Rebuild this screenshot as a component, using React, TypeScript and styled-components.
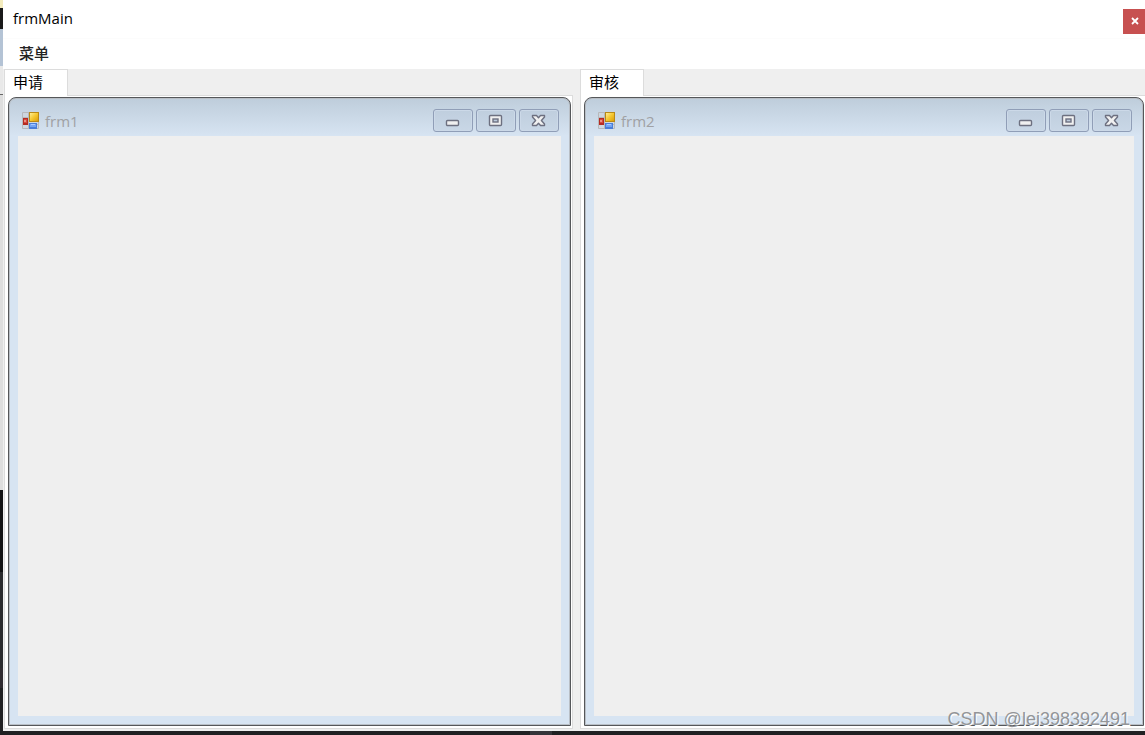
import React from "react";
import styled, { createGlobalStyle } from "styled-components";

const GlobalStyle = createGlobalStyle`
  * { box-sizing: border-box; }
  body {
    margin: 0;
    font-family: "Open Sans", "Noto Sans CJK SC", sans-serif;
    font-size: 15px;
    color: #000;
  }
  button { font: inherit; color: inherit; padding: 0; margin: 0; border: 0; background: none; }
`;

const Desktop = styled.div`
  position: relative;
  display: grid;
  grid-template-columns: 3px minmax(0, 1fr);
  grid-template-rows: minmax(0, 1fr) 4px;
  height: 100vh;
  overflow: hidden;
  background: #202022;
`;

const Behind = styled.div`
  background: linear-gradient(
    #f3ebbd 8px, #19191a 8px 29px, #b4c3d5 29px 66px, #e9e9e9 66px 94px,
    #666 94px 95px, #dedede 95px 490px, #121213 490px 572px, #2b2b2e 572px 668px,
    #302b30 668px 688px, #202022 688px
  );
`;

const Taskbar = styled.div`
  grid-column: 1 / -1;
  background: linear-gradient(90deg, #202022 530px, #353439 530px 552px, #202022 552px);
`;

const MainWindow = styled.div`
  display: flex;
  flex-direction: column;
  min-width: 0;
  background: #efefef;
`;

const TitleBar = styled.header`
  display: flex;
  justify-content: space-between;
  align-items: flex-start;
  height: 38px;
  padding: 9px 0 4px 10px;
  background: #fff;
`;

const Title = styled.span`
  line-height: 18px;
`;

const MainClose = styled.button`
  display: grid;
  place-items: center;
  width: 22px;
  height: 25px;
  padding: 0 0 2px 2px;
  background: #c75050;
`;

const MenuBar = styled.nav`
  height: 31px;
  padding: 0 10px;
  border-top: 1px solid #fcfcfc;
  background: #fff;
`;

const MenuItem = styled.button`
  padding: 4px 6px;
  line-height: 20px;
  font-weight: 500;
  color: #222;
`;

const Panes = styled.main`
  display: grid;
  grid-template-columns: 569fr 565fr;
  gap: 7px;
  flex: 1;
  min-height: 0;
  padding: 0 0 2px 1px;
`;

const Pane = styled.section`
  display: flex;
  flex-direction: column;
  min-width: 0;
`;

const Tab = styled.button`
  z-index: 1;
  align-self: flex-start;
  width: 64px;
  height: 27px;
  margin-bottom: -1px;
  padding: 0 0 3px 8px;
  border: 1px solid #dcdcdc;
  border-bottom: 0;
  line-height: 22px;
  text-align: left;
  background: #fff;
`;

const TabPage = styled.div<{ $clipped: boolean }>`
  display: flex;
  flex: 1;
  min-height: 0;
  padding: 1px 1px 2px 3px;
  border: 1px solid #dcdcdc;
  border-right-width: ${(p) => (p.$clipped ? 0 : 1)}px;
  background: #fff;
`;

const ChildWindow = styled.div`
  display: flex;
  flex-direction: column;
  flex: 1;
  min-width: 0;
  padding: 0 9px 9px 9px;
  border: 1px solid #55575a;
  border-radius: 8px 8px 0 0;
  box-shadow: inset 0 0 0 1px #b9bfc6;
  background: linear-gradient(#becddb, #d7e4f2 38px);
`;

const Caption = styled.div`
  display: flex;
  align-items: flex-start;
  height: 38px;
  padding: 11px 2px 0 4px;
`;

const CaptionText = styled.span`
  flex: 1;
  margin-left: 5px;
  line-height: 24px;
  color: #a0a1a4;
`;

const Controls = styled.div`
  display: flex;
  gap: 3px;
`;

const ControlButton = styled.button`
  display: grid;
  place-items: center;
  width: 40px;
  height: 23px;
  border: 1px solid #909eb7;
  border-radius: 3px;
  box-shadow: inset 0 0 0 1px #ccd9e8;
  background: linear-gradient(#bfcede, #c9d7e6);
`;

const Client = styled.div`
  flex: 1;
  background: #efefef;
`;

const Watermark = styled.span`
  position: absolute;
  right: 15px;
  bottom: 6px;
  font: 18px/20px "Liberation Sans", sans-serif;
  color: #939598;
  text-shadow: 1px 1px 0 #fff;
`;

const IconBox = styled.span`
  display: flex;
  padding-top: 3px;
`;

const FormIcon = () => (
  <svg width="18" height="18" viewBox="0 0 18 18" aria-hidden="true">
    <defs>
      <linearGradient id="gold" x2="1" y2="1">
        <stop stopColor="#fff2a0" />
        <stop offset=".5" stopColor="#f5c730" />
        <stop offset="1" stopColor="#d89a08" />
      </linearGradient>
    </defs>
    <path d="M.5 .5h16v16H.5zM6.5 .5v16M.5 5.5h6M.5 12.5h16" fill="#d0d5da" fillOpacity=".6" stroke="#b7b8bb" />
    <rect x="7.5" y=".5" width="9" height="9" fill="url(#gold)" stroke="#b98916" />
    <rect x="1" y="6" width="5" height="7" fill="#b52c22" />
    <path d="M2 7h3v4H2z" fill="#d8493c" />
    <path d="M2 8h2v2H2z" fill="#eb9083" />
    <rect x="7" y="11" width="8" height="6" fill="#4a7ed8" />
    <path d="M8 12h6v3H8z" fill="#73a4f5" />
    <path d="M9 12h4v1H9z" fill="#a9c9ff" />
  </svg>
);

const Glyph = ({ kind }: { kind: string }) => (
  <svg width="16" height="14" viewBox="0 0 16 14" aria-hidden="true">
    <g fill="#f0f0f0" stroke="#6d7080" strokeWidth="1.4">
      {kind === "Minimize" && <rect x="1.5" y="6.5" width="12" height="5" rx="1" />}
      {kind === "Maximize" && (
        <>
          <rect x="1.5" y="1.5" width="12" height="10" rx="1" />
          <rect x="5" y="5" width="5" height="3" fill="#bccbdc" />
        </>
      )}
      {kind === "Close" && (
        <path
          d="M1.5 1.5h4L7.5 3.7 9.5 1.5h4V3L10.4 6.5 13.5 10v1.5h-4L7.5 9.3 5.5 11.5h-4V10L4.6 6.5 1.5 3z"
          strokeLinejoin="round"
        />
      )}
    </g>
  </svg>
);

const forms = [
  { tab: "申请", title: "frm1" },
  { tab: "审核", title: "frm2" },
];

export default function App() {
  return (
    <>
      <GlobalStyle />
      <Desktop>
        <Behind />
        <MainWindow>
          <TitleBar>
            <Title>frmMain</Title>
            <MainClose aria-label="Close frmMain">
              <svg width="8" height="8" viewBox="0 0 8 8" aria-hidden="true">
                <path d="M1 1l6 6M7 1L1 7" stroke="#fff" strokeWidth="1.8" />
              </svg>
            </MainClose>
          </TitleBar>
          <MenuBar>
            <MenuItem>菜单</MenuItem>
          </MenuBar>
          <Panes>
            {forms.map((form, i) => (
              <Pane key={form.title}>
                <Tab>{form.tab}</Tab>
                <TabPage $clipped={i === forms.length - 1}>
                  <ChildWindow>
                    <Caption>
                      <IconBox>
                        <FormIcon />
                      </IconBox>
                      <CaptionText>{form.title}</CaptionText>
                      <Controls>
                        {["Minimize", "Maximize", "Close"].map((kind) => (
                          <ControlButton key={kind} aria-label={`${kind} ${form.title}`}>
                            <Glyph kind={kind} />
                          </ControlButton>
                        ))}
                      </Controls>
                    </Caption>
                    <Client />
                  </ChildWindow>
                </TabPage>
              </Pane>
            ))}
          </Panes>
        </MainWindow>
        <Taskbar />
        <Watermark>CSDN @lei398392491</Watermark>
      </Desktop>
    </>
  );
}
